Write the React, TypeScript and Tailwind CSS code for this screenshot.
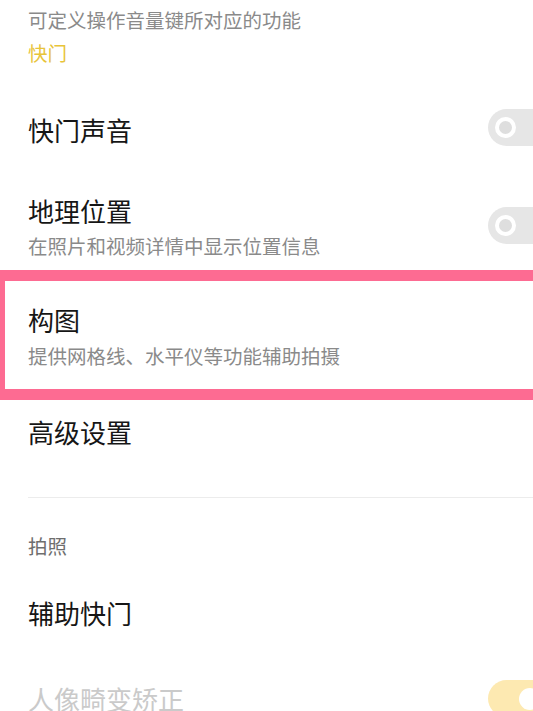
const font = "font-['Noto_Sans_CJK_SC','Noto_Sans',sans-serif]";

function OffSwitch({ className = "" }: { className?: string }) {
  return (
    <div className={`flex h-[37px] w-[64px] shrink-0 items-center rounded-full bg-[#e6e6e6] pl-[7px] ${className}`}>
      <span className="block h-[21px] w-[21px] rounded-full border-[4px] border-white bg-[#dedede]" />
    </div>
  );
}

function DisabledOnSwitch({ className = "" }: { className?: string }) {
  return (
    <div className={`relative h-[37px] w-[62px] shrink-0 rounded-full bg-[#fde9b1] ${className}`}>
      <span className="absolute left-[31px] top-[8px] block h-[22px] w-[22px] rounded-full bg-white" />
    </div>
  );
}

export default function App() {
  return (
    <div className={`h-[711px] w-[533px] overflow-hidden bg-white ${font}`}>
      {/* tail of the previous item */}
      <div className="h-[75px] pl-[28px] pt-[8px]">
        <p className="text-[19.5px] leading-[24px] text-[#8a8a8a]">可定义操作音量键所对应的功能</p>
        <p className="mt-[9px] text-[19.5px] leading-[24px] text-[#e8c43a]">快门</p>
      </div>

      <div className="flex h-[110px] items-start justify-between pl-[28px]">
        <p className="mt-[40px] text-[26px] leading-[30px] text-[#161616]">快门声音</p>
        <OffSwitch className="mt-[34px] -mr-[19px]" />
      </div>

      <div className="flex h-[85px] items-start justify-between pl-[28px]">
        <div className="mt-[11px]">
          <p className="text-[26px] leading-[30px] text-[#161616]">地理位置</p>
          <p className="mt-[8px] text-[19.5px] leading-[24px] text-[#8a8a8a]">在照片和视频详情中显示位置信息</p>
        </div>
        <OffSwitch className="mt-[22px] -mr-[19px]" />
      </div>

      <div className="h-[130px] border-y-[11px] border-l-[5px] border-[#fd6b92] pl-[23px] pt-[24px]">
        <p className="text-[26px] leading-[30px] text-[#161616]">构图</p>
        <p className="mt-[9px] text-[19.5px] leading-[24px] text-[#8a8a8a]">提供网格线、水平仪等功能辅助拍摄</p>
      </div>

      <div className="h-[97px] pl-[28px] pt-[17px]">
        <p className="text-[26px] leading-[30px] text-[#161616]">高级设置</p>
      </div>

      <div className="ml-[28px] h-px bg-[#ececec]" />

      <div className="h-[70px] pl-[28px] pt-[36px]">
        <p className="text-[19.5px] leading-[24px] text-[#6e6e6e]">拍照</p>
      </div>

      <div className="h-[86px] pl-[28px] pt-[30px]">
        <p className="text-[26px] leading-[30px] text-[#161616]">辅助快门</p>
      </div>

      <div className="flex items-start justify-between pl-[28px]">
        <p className="mt-[30px] text-[26px] leading-[30px] text-[#cacaca]">人像畸变矫正</p>
        <DisabledOnSwitch className="mt-[26px] -mr-[17px]" />
      </div>
    </div>
  );
}
